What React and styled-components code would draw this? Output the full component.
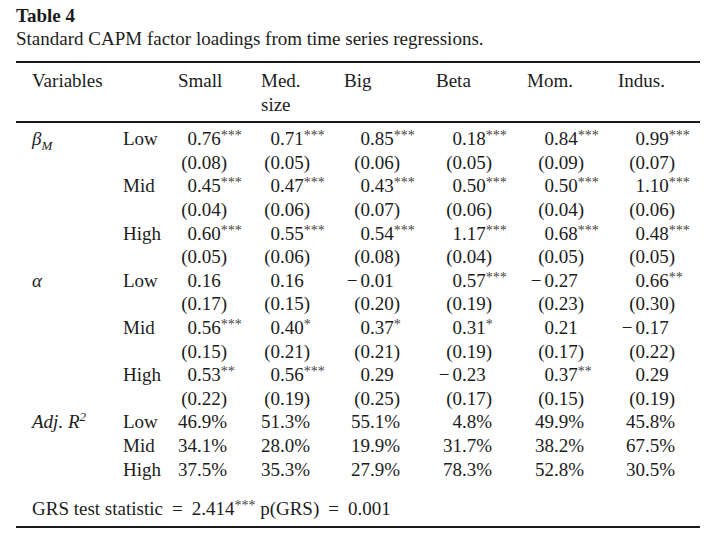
import React from "react";
import styled, { createGlobalStyle } from "styled-components";

const Global = createGlobalStyle`
  html, body { margin: 0; padding: 0; background: #fff; }
  body { font-family: "Liberation Serif", "DejaVu Serif", serif; color: #1c1c1c; }
`;

const Page = styled.div`
  width: 720px;
  height: 536px;
  padding: 0 20px 0 16px;
  box-sizing: border-box;
  overflow: hidden;
`;

const Title = styled.div`
  font-weight: bold;
  font-size: 19px;
  line-height: 22px;
  padding-top: 5px;
`;

const Caption = styled.div`
  font-size: 19px;
  line-height: 24px;
`;

const Rule = styled.div`
  height: 2px;
  background: #1a1a1a;
  margin-top: ${(p) => p.$mt || 0}px;
`;

const COLS = "91px 44px 83px 90px 92px 92px 91px 1fr";

const Block = styled.div`
  padding: ${(p) => p.$pad};
`;

const Row = styled.div`
  display: grid;
  grid-template-columns: ${COLS};
  font-size: 19px;
  line-height: 23.6px;
  height: 23.6px;
  padding-left: 16px;
`;

const HeadRow = styled(Row)`
  height: auto;
  align-items: start;
`;

const HeadCell = styled.div`
  padding-left: ${(p) => p.$indent || 0}px;
`;

const Label = styled.div`
  font-style: italic;
`;

const Sub = styled.div``;

const NumCell = styled.div`
  white-space: nowrap;
`;

const IntPart = styled.span`
  display: inline-block;
  width: 30px;
  text-align: right;
`;

const Stars = styled.span`
  font-size: 14px;
  line-height: 0;
  position: relative;
  top: -5px;
  color: #444;
`;

const Minus = styled.span`
  margin-right: 3px;
`;

const Eq = styled.span`
  margin: 0 9px;
`;

const Footer = styled.div`
  font-size: 19px;
  line-height: 24px;
  padding: 16px 0 5px 16px;
`;

function Num({ v }) {
  const m = v.match(/^(\(?)(-?)(\d+)(\.\d+\)?%?)(\**)$/);
  const [, paren, neg, int, frac, stars] = m;
  return (
    <NumCell>
      <IntPart>
        {paren}
        {neg && <Minus>−</Minus>}
        {int}
      </IntPart>
      {frac}
      {stars && <Stars>{stars}</Stars>}
    </NumCell>
  );
}

const beta = [
  ["Low", ["0.76***", "0.71***", "0.85***", "0.18***", "0.84***", "0.99***"], ["(0.08)", "(0.05)", "(0.06)", "(0.05)", "(0.09)", "(0.07)"]],
  ["Mid", ["0.45***", "0.47***", "0.43***", "0.50***", "0.50***", "1.10***"], ["(0.04)", "(0.06)", "(0.07)", "(0.06)", "(0.04)", "(0.06)"]],
  ["High", ["0.60***", "0.55***", "0.54***", "1.17***", "0.68***", "0.48***"], ["(0.05)", "(0.06)", "(0.08)", "(0.04)", "(0.05)", "(0.05)"]],
];

const alpha = [
  ["Low", ["0.16", "0.16", "-0.01", "0.57***", "-0.27", "0.66**"], ["(0.17)", "(0.15)", "(0.20)", "(0.19)", "(0.23)", "(0.30)"]],
  ["Mid", ["0.56***", "0.40*", "0.37*", "0.31*", "0.21", "-0.17"], ["(0.15)", "(0.21)", "(0.21)", "(0.19)", "(0.17)", "(0.22)"]],
  ["High", ["0.53**", "0.56***", "0.29", "-0.23", "0.37**", "0.29"], ["(0.22)", "(0.19)", "(0.25)", "(0.17)", "(0.15)", "(0.19)"]],
];

const r2 = [
  ["Low", ["46.9%", "51.3%", "55.1%", "4.8%", "49.9%", "45.8%"]],
  ["Mid", ["34.1%", "28.0%", "19.9%", "31.7%", "38.2%", "67.5%"]],
  ["High", ["37.5%", "35.3%", "27.9%", "78.3%", "52.8%", "30.5%"]],
];

const Sb = styled.sub`
  font-size: 13px;
`;
const Sp = styled.sup`
  font-size: 13px;
  line-height: 0;
`;

function Group({ label, rows }) {
  const out = [];
  rows.forEach(([sub, vals, ses], i) => {
    out.push(
      <Row key={sub}>
        <Label>{i === 0 ? label : ""}</Label>
        <Sub>{sub}</Sub>
        {vals.map((v, j) => (
          <Num key={j} v={v} />
        ))}
      </Row>
    );
    if (ses)
      out.push(
        <Row key={sub + "se"}>
          <div />
          <div />
          {ses.map((v, j) => (
            <Num key={j} v={v} />
          ))}
        </Row>
      );
  });
  return out;
}

export default function App() {
  return (
    <Page>
      <Global />
      <Title>Table 4</Title>
      <Caption>Standard CAPM factor loadings from time series regressions.</Caption>
      <Rule $mt={10} />
      <Block $pad="6px 0 5px">
        <HeadRow>
          <HeadCell>Variables</HeadCell>
          <div />
          <HeadCell $indent={11}>Small</HeadCell>
          <HeadCell $indent={11}>
            Med.
            <br />
            size
          </HeadCell>
          <HeadCell $indent={4}>Big</HeadCell>
          <HeadCell $indent={4}>Beta</HeadCell>
          <HeadCell $indent={3}>Mom.</HeadCell>
          <HeadCell $indent={3}>Indus.</HeadCell>
        </HeadRow>
      </Block>
      <Rule />
      <Block $pad="4px 0 0">
        <Group label={<span>β<Sb>M</Sb></span>} rows={beta} />
        <Group label="α" rows={alpha} />
        <Group label={<span>Adj. R<Sp>2</Sp></span>} rows={r2} />
      </Block>
      <Footer>
        GRS test statistic<Eq>=</Eq>2.414<Stars>***</Stars> p(GRS)<Eq>=</Eq>0.001
      </Footer>
      <Rule />
    </Page>
  );
}
